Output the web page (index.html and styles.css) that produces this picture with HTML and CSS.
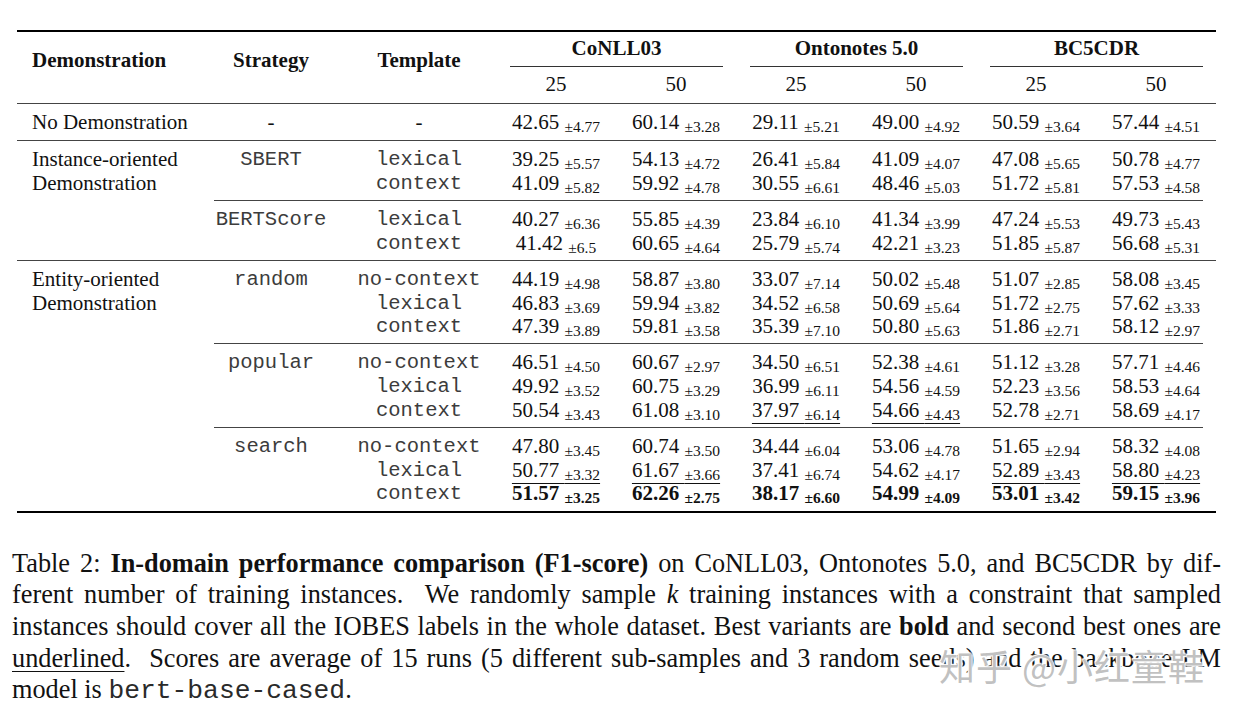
FILE: index.html
```html
<!DOCTYPE html>
<html lang="en">
<head>
<meta charset="utf-8">
<title>Table 2</title>
<link rel="stylesheet" href="styles.css">
</head>
<body>
<div class="page">
<table class="results">
  <colgroup>
    <col class="c-demo"><col class="c-strat"><col class="c-tpl">
    <col class="c-num"><col class="c-num"><col class="c-num"><col class="c-num"><col class="c-num"><col class="c-num">
  </colgroup>
  <thead>
    <tr class="h1">
      <th rowspan="2" class="demo top">Demonstration</th>
      <th rowspan="2" class="top">Strategy</th>
      <th rowspan="2" class="top">Template</th>
      <th colspan="2" class="grp"><div class="grp-label">CoNLL03</div></th>
      <th colspan="2" class="grp"><div class="grp-label">Ontonotes 5.0</div></th>
      <th colspan="2" class="grp"><div class="grp-label">BC5CDR</div></th>
    </tr>
    <tr class="h2">
      <th>25</th><th>50</th><th>25</th><th>50</th><th>25</th><th>50</th>
    </tr>
  </thead>
  <tbody>
    <tr class="rule nodemo">
      <td class="demo">No Demonstration</td>
      <td>-</td>
      <td>-</td>
      <td><div>42.65 <span class="pm">±4.77</span></div></td>
      <td><div>60.14 <span class="pm">±3.28</span></div></td>
      <td><div>29.11 <span class="pm">±5.21</span></div></td>
      <td><div>49.00 <span class="pm">±4.92</span></div></td>
      <td><div>50.59 <span class="pm">±3.64</span></div></td>
      <td><div>57.44 <span class="pm">±4.51</span></div></td>
    </tr>

    <tr>
      <td rowspan="3" class="demo rule-cell">Instance-oriented<br>Demonstration</td>
      <td class="mono">SBERT</td>
      <td class="mono"><div>lexical</div><div>context</div></td>
      <td><div>39.25 <span class="pm">±5.57</span></div><div>41.09 <span class="pm">±5.82</span></div></td>
      <td><div>54.13 <span class="pm">±4.72</span></div><div>59.92 <span class="pm">±4.78</span></div></td>
      <td><div>26.41 <span class="pm">±5.84</span></div><div>30.55 <span class="pm">±6.61</span></div></td>
      <td><div>41.09 <span class="pm">±4.07</span></div><div>48.46 <span class="pm">±5.03</span></div></td>
      <td><div>47.08 <span class="pm">±5.65</span></div><div>51.72 <span class="pm">±5.81</span></div></td>
      <td><div>50.78 <span class="pm">±4.77</span></div><div>57.53 <span class="pm">±4.58</span></div></td>
    </tr>
    <tr class="mid"><td colspan="8"><div class="cmid"></div></td></tr>
    <tr class="rule">
      <td class="mono">BERTScore</td>
      <td class="mono"><div>lexical</div><div>context</div></td>
      <td><div>40.27 <span class="pm">±6.36</span></div><div>41.42 <span class="pm">±6.5</span></div></td>
      <td><div>55.85 <span class="pm">±4.39</span></div><div>60.65 <span class="pm">±4.64</span></div></td>
      <td><div>23.84 <span class="pm">±6.10</span></div><div>25.79 <span class="pm">±5.74</span></div></td>
      <td><div>41.34 <span class="pm">±3.99</span></div><div>42.21 <span class="pm">±3.23</span></div></td>
      <td><div>47.24 <span class="pm">±5.53</span></div><div>51.85 <span class="pm">±5.87</span></div></td>
      <td><div>49.73 <span class="pm">±5.43</span></div><div>56.68 <span class="pm">±5.31</span></div></td>
    </tr>

    <tr>
      <td rowspan="5" class="demo">Entity-oriented<br>Demonstration</td>
      <td class="mono">random</td>
      <td class="mono"><div>no-context</div><div>lexical</div><div>context</div></td>
      <td><div>44.19 <span class="pm">±4.98</span></div><div>46.83 <span class="pm">±3.69</span></div><div>47.39 <span class="pm">±3.89</span></div></td>
      <td><div>58.87 <span class="pm">±3.80</span></div><div>59.94 <span class="pm">±3.82</span></div><div>59.81 <span class="pm">±3.58</span></div></td>
      <td><div>33.07 <span class="pm">±7.14</span></div><div>34.52 <span class="pm">±6.58</span></div><div>35.39 <span class="pm">±7.10</span></div></td>
      <td><div>50.02 <span class="pm">±5.48</span></div><div>50.69 <span class="pm">±5.64</span></div><div>50.80 <span class="pm">±5.63</span></div></td>
      <td><div>51.07 <span class="pm">±2.85</span></div><div>51.72 <span class="pm">±2.75</span></div><div>51.86 <span class="pm">±2.71</span></div></td>
      <td><div>58.08 <span class="pm">±3.45</span></div><div>57.62 <span class="pm">±3.33</span></div><div>58.12 <span class="pm">±2.97</span></div></td>
    </tr>
    <tr class="mid"><td colspan="8"><div class="cmid"></div></td></tr>
    <tr>
      <td class="mono">popular</td>
      <td class="mono"><div>no-context</div><div>lexical</div><div>context</div></td>
      <td><div>46.51 <span class="pm">±4.50</span></div><div>49.92 <span class="pm">±3.52</span></div><div>50.54 <span class="pm">±3.43</span></div></td>
      <td><div>60.67 <span class="pm">±2.97</span></div><div>60.75 <span class="pm">±3.29</span></div><div>61.08 <span class="pm">±3.10</span></div></td>
      <td><div>34.50 <span class="pm">±6.51</span></div><div>36.99 <span class="pm">±6.11</span></div><div><span class="second">37.97 <span class="pm">±6.14</span></span></div></td>
      <td><div>52.38 <span class="pm">±4.61</span></div><div>54.56 <span class="pm">±4.59</span></div><div><span class="second">54.66 <span class="pm">±4.43</span></span></div></td>
      <td><div>51.12 <span class="pm">±3.28</span></div><div>52.23 <span class="pm">±3.56</span></div><div>52.78 <span class="pm">±2.71</span></div></td>
      <td><div>57.71 <span class="pm">±4.46</span></div><div>58.53 <span class="pm">±4.64</span></div><div>58.69 <span class="pm">±4.17</span></div></td>
    </tr>
    <tr class="mid"><td colspan="8"><div class="cmid"></div></td></tr>
    <tr class="last">
      <td class="mono">search</td>
      <td class="mono"><div>no-context</div><div>lexical</div><div>context</div></td>
      <td><div>47.80 <span class="pm">±3.45</span></div><div><span class="second">50.77 <span class="pm">±3.32</span></span></div><div class="best">51.57 <span class="pm">±3.25</span></div></td>
      <td><div>60.74 <span class="pm">±3.50</span></div><div><span class="second">61.67 <span class="pm">±3.66</span></span></div><div class="best">62.26 <span class="pm">±2.75</span></div></td>
      <td><div>34.44 <span class="pm">±6.04</span></div><div>37.41 <span class="pm">±6.74</span></div><div class="best">38.17 <span class="pm">±6.60</span></div></td>
      <td><div>53.06 <span class="pm">±4.78</span></div><div>54.62 <span class="pm">±4.17</span></div><div class="best">54.99 <span class="pm">±4.09</span></div></td>
      <td><div>51.65 <span class="pm">±2.94</span></div><div><span class="second">52.89 <span class="pm">±3.43</span></span></div><div class="best">53.01 <span class="pm">±3.42</span></div></td>
      <td><div>58.32 <span class="pm">±4.08</span></div><div><span class="second">58.80 <span class="pm">±4.23</span></span></div><div class="best">59.15 <span class="pm">±3.96</span></div></td>
    </tr>
  </tbody>
</table>

<p class="caption">
  <span class="line">Table 2: <b>In-domain performance comparison (F1-score)</b> on CoNLL03, Ontonotes 5.0, and BC5CDR by dif-</span>
  <span class="line">ferent number of training instances. &nbsp;We randomly sample <i>k</i> training instances with a constraint that sampled</span>
  <span class="line">instances should cover all the IOBES labels in the whole dataset. Best variants are <b>bold</b> and second best ones are</span>
  <span class="line"><u>underlined</u>. &nbsp;Scores are average of 15 runs (5 different sub-samples and 3 random seeds) and the backbone LM</span>
  <span class="line final">model is <code>bert-base-cased</code>.</span>
</p>

<div class="watermark">知乎 @小红童鞋</div>
</div>
</body>
</html>
```

FILE: styles.css
```css
html, body {
  margin: 0;
  padding: 0;
  background: #ffffff;
}

body {
  font-family: "Liberation Serif", "Times New Roman", serif;
  color: #111111;
}

.page {
  position: relative;
  width: 1238px;
  height: 714px;
  padding-top: 30px;
  box-sizing: border-box;
  overflow: hidden;
}

/* ---------- table ---------- */
.results {
  margin-left: 17px;
  width: 1199px;
  table-layout: fixed;
  border-collapse: separate;
  border-spacing: 0;
  border-top: 2px solid #000;
  border-bottom: 2px solid #000;
  font-size: 21px;
  line-height: 23.7px;
}

.c-demo { width: 183px; }
.c-strat { width: 142px; }
.c-tpl { width: 154px; }
.c-num { width: 120px; }

.results th,
.results td {
  padding: 7px 0 4.5px;
  text-align: center;
  vertical-align: top;
  white-space: nowrap;
}

.results th {
  font-weight: bold;
}

/* header */
.h1 th.top {
  padding: 17px 0 0;
  border-bottom: 1px solid #444;
}

.h1 th.grp {
  padding: 5px 0 0;
}

.grp-label {
  margin: 0 13px 0 14px;
  padding-bottom: 5px;
  border-bottom: 1px solid #333;
}

.h2 th {
  font-weight: normal;
  padding: 6px 0 6.6px;
  border-bottom: 1px solid #444;
}

/* body rules */
tr.nodemo > td {
  padding: 7px 0 5.3px;
}

.results .demo,
.results .h1 th.demo,
.results tr.nodemo > td.demo {
  text-align: left;
  padding-left: 15px;
}

tr.rule > td,
td.rule-cell {
  border-bottom: 1px solid #444;
}

tr.mid > td {
  padding: 0;
  line-height: 0;
  font-size: 0;
}

.cmid {
  margin: 0 13px 0 14px;
  border-top: 1px solid #444;
}

.mono {
  font-family: "Liberation Mono", "Courier New", monospace;
  font-size: 20.5px;
  color: #3c3c3c;
}

.pm {
  font-size: 15.5px;
  line-height: 0;
  vertical-align: -3px;
}

.best {
  font-weight: bold;
}

.second {
  text-decoration: underline;
  text-decoration-thickness: 1px;
  text-underline-offset: 6px;
}

/* ---------- caption ---------- */
.caption {
  margin: 35px 0 0 12px;
  width: 1209px;
  font-size: 26.3px;
  line-height: 31.7px;
}

.caption .line {
  display: block;
  text-align: justify;
  text-align-last: justify;
}

.caption .line.final {
  text-align: left;
  text-align-last: left;
}

.caption u {
  text-decoration-thickness: 1px;
  text-underline-offset: 4px;
}

.caption code {
  font-family: "Liberation Mono", "Courier New", monospace;
  font-size: 26.3px;
  color: #2a2a2a;
}

/* ---------- watermark overlay ---------- */
.watermark {
  position: absolute;
  left: 939px;
  top: 641px;
  font-family: "Noto Sans CJK SC", "Noto Sans", sans-serif;
  font-size: 36px;
  line-height: 48px;
  letter-spacing: 1px;
  color: rgba(165, 165, 165, 0.7);
  text-shadow: 0 0 2px #fff, 0 0 2px #fff, 1px 1px 1px #fff, -1px -1px 1px #fff;
  white-space: nowrap;
}
```
